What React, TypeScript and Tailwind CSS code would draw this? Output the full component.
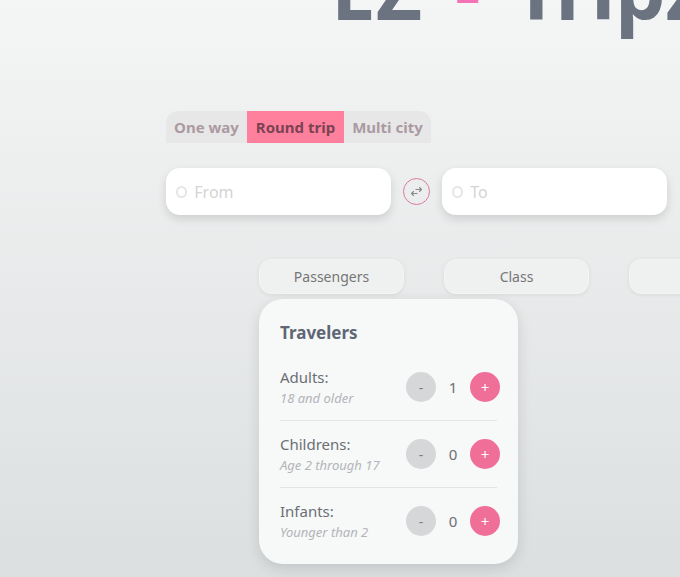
import { useState } from 'react'

const tripTypes = [
  { label: 'One way', width: 'w-[81px]' },
  { label: 'Round trip', width: 'w-[97px]' },
  { label: 'Multi city', width: 'w-[87px]' },
]

const travelerRows = [
  { key: 'adults', label: 'Adults:', sub: '18 and older', initial: 1 },
  { key: 'children', label: 'Childrens:', sub: 'Age 2 through 17', initial: 0 },
  { key: 'infants', label: 'Infants:', sub: 'Younger than 2', initial: 0 },
]

function SwapIcon() {
  return (
    <svg width="13" height="11" viewBox="0 0 13 11" fill="none" stroke="#8a8a8a" strokeWidth="1.1" strokeLinecap="round" strokeLinejoin="round">
      <path d="M6 3.5h5.5" />
      <path d="M9.5 1.5l2 2-2 2" />
      <path d="M7 7.5H1.5" />
      <path d="M3.5 5.5l-2 2 2 2" />
    </svg>
  )
}

function PlaceInput({ placeholder }: { placeholder: string }) {
  return (
    <div className="flex h-[47px] w-[225px] items-center gap-[7px] rounded-[14px] bg-white pl-[10px] shadow-[0_4px_10px_rgba(0,0,0,0.13)]">
      <span className="h-[12px] w-[12px] rounded-full border-2 border-[#e6e6e6]" />
      <input
        type="text"
        placeholder={placeholder}
        className="w-full bg-transparent text-[16px] text-gray-700 placeholder-[#d4d4d4] outline-none"
      />
    </div>
  )
}

export default function App() {
  const [trip, setTrip] = useState('Round trip')
  const [counts, setCounts] = useState<Record<string, number>>(
    Object.fromEntries(travelerRows.map(r => [r.key, r.initial]))
  )

  const change = (key: string, delta: number) => {
    setCounts(c => ({ ...c, [key]: Math.max(0, c[key] + delta) }))
  }

  return (
    <div
      className="min-h-[577px] overflow-hidden bg-gradient-to-b from-[#f4f5f5] to-[#dcdfe0]"
      style={{ fontFamily: '"Noto Sans", "Open Sans", sans-serif' }}
    >
      <h1 className="-mt-[51px] h-[80px] whitespace-nowrap pl-[331px] text-[80px] font-bold leading-none text-[#6b7280] [word-spacing:12px]">
        EZ <span className="text-[#f472b6]">-</span> Tripz
      </h1>

      <div className="mt-[82px] pl-[166px]">
        {/* trip type */}
        <div className="flex w-fit overflow-hidden rounded-t-[12px] bg-[#e7e7e7]">
          {tripTypes.map(t => (
            <button
              key={t.label}
              onClick={() => setTrip(t.label)}
              className={`${t.width} h-[32px] text-[15px] font-bold ${
                trip === t.label ? 'bg-[#ff809d] text-[#7a4353]' : 'text-[#ab9aa1]'
              }`}
            >
              {t.label}
            </button>
          ))}
        </div>

        {/* from / to */}
        <div className="mt-[25px] flex items-center gap-[12px]">
          <PlaceInput placeholder="From" />
          <button className="flex h-[27px] w-[27px] items-center justify-center rounded-full border-[1.5px] border-[#d97a9d]">
            <SwapIcon />
          </button>
          <PlaceInput placeholder="To" />
        </div>

        {/* options */}
        <div className="mt-[44px] flex gap-[40px] pl-[93px]">
          {['Passengers', 'Class', ''].map((label, i) => (
            <button
              key={i}
              className="h-[35px] w-[145px] shrink-0 rounded-[12px] border border-[#f3f4f4] bg-[#eff0f0] text-[14px] text-[#767676] shadow-[0_1px_4px_rgba(0,0,0,0.07)]"
            >
              {label}
            </button>
          ))}
        </div>

        {/* travelers dropdown */}
        <div className="ml-[93px] mt-[5px] h-[265px] w-[259px] rounded-[24px] bg-[#f7f8f8] pt-[22px] shadow-[0_4px_14px_rgba(0,0,0,0.12)]">
          <h2 className="px-[21px] text-[17px] font-bold leading-[24px] text-[#5f6775]">Travelers</h2>
          <div className="mt-[9px] px-[21px]">
            {travelerRows.map((row, i) => (
              <div
                key={row.key}
                className={`flex items-center justify-between py-[12px] ${
                  i < travelerRows.length - 1 ? 'border-b border-[#e3e4e5]' : ''
                }`}
              >
                <div>
                  <div className="text-[15px] leading-[22px] text-[#6b6f75]">{row.label}</div>
                  <div className="text-[13px] italic leading-[20px] text-[#b3b5b8]">{row.sub}</div>
                </div>
                <div className="-mr-[3px] flex items-center">
                  <button
                    onClick={() => change(row.key, -1)}
                    className="flex h-[30px] w-[30px] items-center justify-center rounded-full bg-[#d5d7d9] text-[14px] text-[#7d7f82]"
                  >
                    -
                  </button>
                  <span className="w-[34px] text-center text-[15px] text-[#6e7074]">{counts[row.key]}</span>
                  <button
                    onClick={() => change(row.key, 1)}
                    className="flex h-[30px] w-[30px] items-center justify-center rounded-full bg-[#ef6f99] text-[15px] text-white"
                  >
                    +
                  </button>
                </div>
              </div>
            ))}
          </div>
        </div>
      </div>
    </div>
  )
}
